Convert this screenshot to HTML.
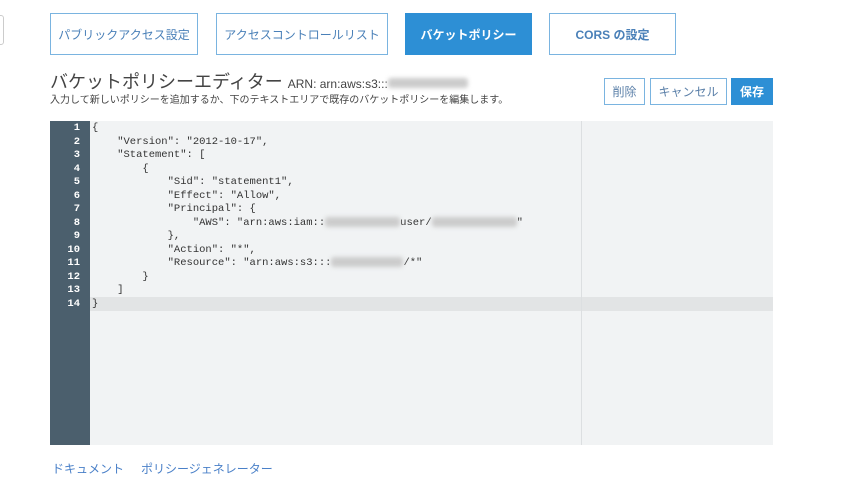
<!DOCTYPE html>
<html><head><meta charset="utf-8"><style>
*{margin:0;padding:0;box-sizing:border-box}
body{width:850px;height:491px;background:#fff;position:relative;overflow:hidden;font-family:"Liberation Sans","Noto Sans CJK JP",sans-serif;color:#444}
.tab{position:absolute;top:13px;height:42px;border:1px solid #7ab4e0;color:#4a80b8;font-size:12px;display:flex;align-items:center;justify-content:center;background:#fff}
.tab.on{background:#2d8fd5;border-color:#2d8fd5;color:#fff;font-weight:bold}
.btn{position:absolute;top:78px;height:27px;border:1px solid #7ab4e0;color:#5a7fa8;font-size:12px;display:flex;align-items:center;justify-content:center;background:#fff}
.ed{position:absolute;left:50px;top:121px;width:723px;height:324px;background:#f1f3f4}
.gut{position:absolute;left:0;top:0;width:40px;height:324px;background:#4b5f6d}
.ln{width:30px;text-align:right;color:#fff;font:bold 10.5px/13.5px "Liberation Mono",monospace;height:13.5px}
.code{position:absolute;left:42px;font:10.5px/13.5px "Liberation Mono",monospace;color:#333;white-space:pre}
.blur{display:inline-block;background:#ccc;border-radius:3px;height:10px;vertical-align:middle;filter:blur(2px)}
.lk{position:absolute;top:460px;color:#4a80c8;font-size:12px}
</style></head><body>
<div style="position:absolute;left:-4px;top:15px;width:8px;height:30px;border:1px solid #ccc;border-radius:3px"></div>
<div class="tab" style="left:50px;width:148px">パブリックアクセス設定</div>
<div class="tab" style="left:216px;width:172px">アクセスコントロールリスト</div>
<div class="tab on" style="left:405px;width:127px">バケットポリシー</div>
<div class="tab" style="left:549px;width:127px;font-weight:bold">CORS の設定</div>
<div style="position:absolute;left:50px;top:68px;font-size:18px;color:#444;white-space:nowrap">バケットポリシーエディター <span style="font-size:12px">ARN: arn:aws:s3:::</span><span class="blur" style="width:80px"></span></div>
<div style="position:absolute;left:50px;top:91px;font-size:10px;color:#444;white-space:nowrap">入力して新しいポリシーを追加するか、下のテキストエリアで既存のバケットポリシーを編集します。</div>
<div class="btn" style="left:604px;width:41px">削除</div>
<div class="btn" style="left:650px;width:77px">キャンセル</div>
<div class="btn" style="left:731px;width:42px;background:#2d8fd5;border-color:#2d8fd5;color:#fff;font-weight:bold">保存</div>
<div class="ed">
<div style="position:absolute;left:40px;top:176px;width:683px;height:14px;background:#e2e4e5"></div>
<div style="position:absolute;left:531px;top:0;width:1px;height:324px;background:#dcdfe1"></div>
<div class="gut"></div>
<div style="position:absolute;top:1px;left:0">
<div class="ln">1</div><div class="ln">2</div><div class="ln">3</div><div class="ln">4</div><div class="ln">5</div><div class="ln">6</div><div class="ln">7</div><div class="ln">8</div><div class="ln">9</div><div class="ln">10</div><div class="ln">11</div><div class="ln">12</div><div class="ln">13</div><div class="ln">14</div>
</div>
<div class="code" style="top:1px">{
    "Version": "2012-10-17",
    "Statement": [
        {
            "Sid": "statement1",
            "Effect": "Allow",
            "Principal": {
                "AWS": "arn:aws:iam::<span class="blur" style="width:75px"></span>user/<span class="blur" style="width:85px"></span>"
            },
            "Action": "*",
            "Resource": "arn:aws:s3:::<span class="blur" style="width:72px"></span>/*"
        }
    ]
}</div>
</div>
<div class="lk" style="left:52px">ドキュメント</div>
<div class="lk" style="left:141px">ポリシージェネレーター</div>
</body></html>
